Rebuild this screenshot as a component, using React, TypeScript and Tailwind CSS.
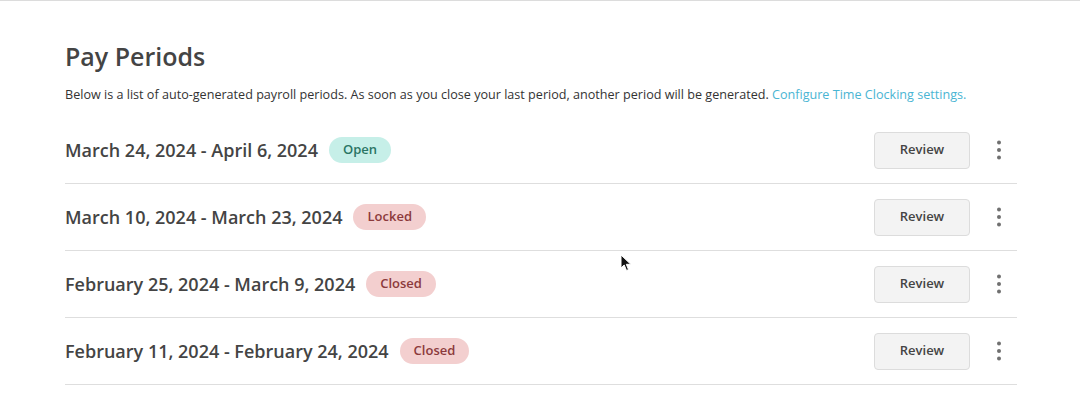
type Period = {
  range: string;
  status: "Open" | "Locked" | "Closed";
};

const periods: Period[] = [
  { range: "March 24, 2024 - April 6, 2024", status: "Open" },
  { range: "March 10, 2024 - March 23, 2024", status: "Locked" },
  { range: "February 25, 2024 - March 9, 2024", status: "Closed" },
  { range: "February 11, 2024 - February 24, 2024", status: "Closed" },
];

const StatusBadge = ({ status }: { status: Period["status"] }) => {
  const open = status === "Open";
  return (
    <span
      className={
        open
          ? "inline-flex h-[26px] items-center rounded-full bg-[#c6efe8] px-[14px] text-[13px] font-semibold text-[#2a7564]"
          : "inline-flex h-[26px] items-center rounded-full bg-[#f3cfcf] px-[14px] text-[13px] font-semibold text-[#8c3a3c]"
      }
    >
      {status}
    </span>
  );
};

const Kebab = () => (
  <svg width="6" height="20" viewBox="0 0 6 20" fill="#707070">
    <circle cx="3" cy="2.5" r="2" />
    <circle cx="3" cy="10" r="2" />
    <circle cx="3" cy="17.5" r="2" />
  </svg>
);

const App = () => {
  return (
    <div className="relative h-[410px] w-[1080px] overflow-hidden border-t border-[#dcdcdc] bg-white font-['Open_Sans',sans-serif] text-[#444]">
      <div className="ml-[65px] mr-[63px] pt-[39px]">
        <h1 className="text-[25px] font-semibold leading-[32px] text-[#444]">Pay Periods</h1>
        <p className="mt-[14px] text-[12.6px] leading-[18px] text-[#333]">
          Below is a list of auto-generated payroll periods. As soon as you close your last period, another period will be
          generated.{" "}
          <a href="#" className="text-[#4ab5d3]">
            Configure Time Clocking settings.
          </a>
        </p>

        <div className="mt-[13px]">
          {periods.map(p => (
            <div key={p.range} className="flex h-[67px] items-center border-b border-[#dedede]">
              <div className="flex flex-1 items-center gap-[11px]">
                <span className="text-[18px] font-semibold text-[#444]">{p.range}</span>
                <StatusBadge status={p.status} />
              </div>
              <button className="h-[37px] w-[96px] rounded-[4px] border border-[#dcdcdc] bg-[#f3f3f3] text-[13px] font-semibold text-[#444]">
                Review
              </button>
              <button className="ml-[16px] mr-[5px] flex h-[36px] w-[26px] items-center justify-center">
                <Kebab />
              </button>
            </div>
          ))}
        </div>
      </div>

      <svg className="absolute left-[620px] top-[253px]" width="12" height="18" viewBox="0 0 12 18">
        <path d="M1 1 L1 14 L4.2 11 L6.5 16.5 L8.5 15.6 L6.3 10.3 L10.8 10.3 Z" fill="#111" stroke="#fff" strokeWidth="1" />
      </svg>
    </div>
  );
};

export default App;
